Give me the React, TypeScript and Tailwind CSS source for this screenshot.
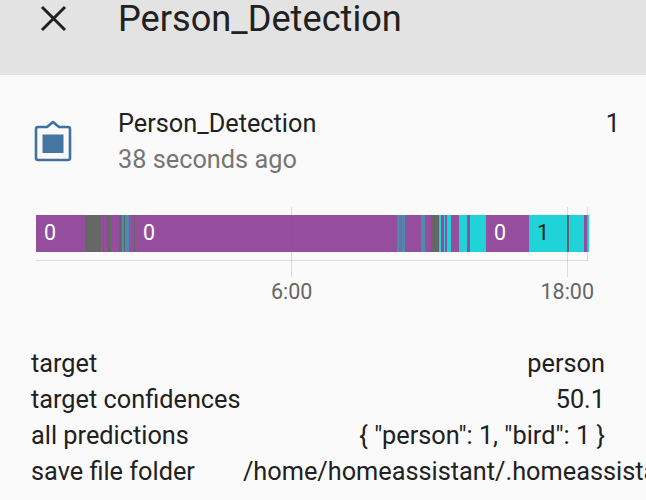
const P = "#954e9e", G = "#666666", C = "#20d3d8", B = "#4b8bb0";
const stops: [number, string, string?, string?][] = [
  [85, P, "0", "#ffffff"], [101, G], [102.5, P], [103.5, G], [107, P], [111, G], [115, P], [119, P], [121, G], [122, P], [124, B], [125, G], [129, B], [134, P], [135, G],
  [397, P, "0", "#ffffff"], [399, B], [402, "#6f6fa8"], [405, B], [421, P], [425, B], [431, P], [439, G], [441, C], [444, P], [445, C], [447, P], [451, C], [459, P], [467, C], [470, P], [486, C],
  [529, P, "0", "#ffffff"], [567, C, "1", "#212121"], [568.5, G], [584, C], [587, P], [589, C],
];
const segs = stops.map(([end, color, label, ink], i) => ({ w: end - (i ? stops[i - 1][0] : 36), color, label, ink }));
const rows = [
  ["target", "person"],
  ["target confidences", "50.1"],
  ["all predictions", '{ "person": 1, "bird": 1 }'],
  ["save file folder", "/home/homeassistant/.homeassistant/snapshots/"],
];

export default function App() {
  return (
    <div className="w-[646px] h-[500px] overflow-hidden bg-[#fafafa] text-[#212121] font-['Roboto',sans-serif]">
      <header className="h-[75px] bg-[#e3e3e3] flex items-start pl-[39px]">
        <svg width="27" height="27" viewBox="0 0 27 27" className="mt-[5px] ml-px shrink-0">
          <path d="M2 2 L25 25 M25 2 L2 25" stroke="#212121" strokeWidth="3" fill="none" />
        </svg>
        <h1 className="ml-[51px] text-[36.2px] leading-[37px] text-[#212121]">Person_Detection</h1>
      </header>

      <section className="flex items-start pt-[31px] pl-[34px] pr-[26px]">
        <svg width="38" height="42" viewBox="0 0 38 42" className="mt-[14px] shrink-0">
          <path d="M4 7 H13 L19 2 L25 7 H34 Q36 7 36 9 V38 Q36 40 34 40 H4 Q2 40 2 38 V9 Q2 7 4 7 Z" fill="none" stroke="#3f72a0" strokeWidth="2.6" strokeLinejoin="round" />
          <rect x="8.5" y="14.5" width="21" height="18.5" fill="#4575a2" />
        </svg>
        <div className="ml-[46px] flex-1">
          <div className="text-[25.3px] leading-[36px] text-[#212121]">Person_Detection</div>
          <div className="text-[25.3px] leading-[36px] text-[#757575]">38 seconds ago</div>
        </div>
        <div className="text-[25.3px] leading-[36px] text-[#212121]">1</div>
      </section>

      <section className="relative mt-[29px]">
        <div className="absolute left-[291px] top-0 h-[70px] w-px bg-[#666]/20" />
        <div className="absolute left-[567px] top-0 h-[70px] w-px bg-[#666]/20" />
        <div className="absolute left-[587px] top-0 h-[54px] w-px bg-[#666]/20" />
        <div className="pl-[36px] pt-[8px]">
          <div className="flex h-[37px] w-[553px]">
            {segs.map((s, i) => (
              <div
                key={i}
                className="h-full shrink-0 text-[21.5px] leading-[35px]"
                style={{ width: s.w, backgroundColor: s.color, color: s.ink, paddingLeft: s.label ? 8 : 0 }}
              >
                {s.label}
              </div>
            ))}
          </div>
        </div>
        <div className="ml-[36px] mt-[8px] h-[1px] w-[552px] bg-[#dcdcdc]" />
        <div className="flex pl-[271px] pt-[17px] gap-[228px] text-[21.5px] leading-[28px] text-[#666]">
          <span>6:00</span>
          <span>18:00</span>
        </div>
      </section>

      <section className="mt-[40px] pl-[31px] pr-[41px]">
        {rows.map(([k, v]) => (
          <div key={k} className="flex justify-between gap-[48px] h-[36px] text-[25.3px] leading-[36px] text-[#212121] whitespace-nowrap">
            <span className="shrink-0">{k}</span>
            <span className="shrink-0">{v}</span>
          </div>
        ))}
      </section>
    </div>
  );
}
